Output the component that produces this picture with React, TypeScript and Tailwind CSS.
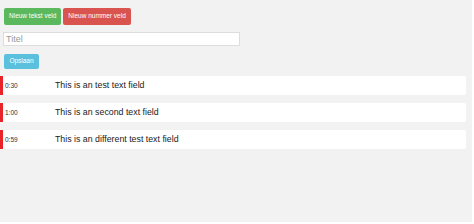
import React from 'react';

const items = [
  { time: '0:30', text: 'This is an test text field' },
  { time: '1:00', text: 'This is an second text field' },
  { time: '0:59', text: 'This is an different test text field' },
];

export default function App() {
  return (
    <div className="w-[474px] h-[224px] bg-white" style={{ fontFamily: '"Liberation Sans", Arial, sans-serif' }}>
      <div className="w-[472px] h-[222px] bg-[#f2f2f2] pt-[8px] flex flex-col">
        <div className="flex gap-[2px] pl-[4px]">
          <button className="h-[17px] px-[5px] rounded-[2px] bg-[#5cb85c] text-white text-[6.5px] leading-none">
            Nieuw tekst veld
          </button>
          <button className="h-[17px] px-[5px] rounded-[2px] bg-[#d9534f] text-white text-[6.5px] leading-none">
            Nieuw nummer veld
          </button>
        </div>

        <div className="flex pl-[3px] mt-[7px]">
          <input
            placeholder="Titel"
            className="w-[237px] h-[14px] bg-white border border-[#ddd] px-[2px] text-[9px] text-[#333] placeholder:text-[#999] outline-none"
          />
        </div>

        <div className="flex pl-[4px] mt-[8px]">
          <button className="h-[15px] w-[35px] rounded-[2px] bg-[#5bc0de] text-white text-[6.5px] font-medium leading-none">
            Opslaan
          </button>
        </div>

        <div className="mt-[7px] flex flex-col gap-[8px]">
          {items.map((it) => (
            <div
              key={it.time}
              className="w-[466px] h-[19px] bg-white border-l-[3px] border-[#e8232a] rounded-r-[2px] flex items-center"
            >
              <span className="w-[52px] pl-[2px] text-[6.5px] text-[#333]">{it.time}</span>
              <span className="text-[8.8px] text-[#1a1a1a]">{it.text}</span>
            </div>
          ))}
        </div>
      </div>
    </div>
  );
}
